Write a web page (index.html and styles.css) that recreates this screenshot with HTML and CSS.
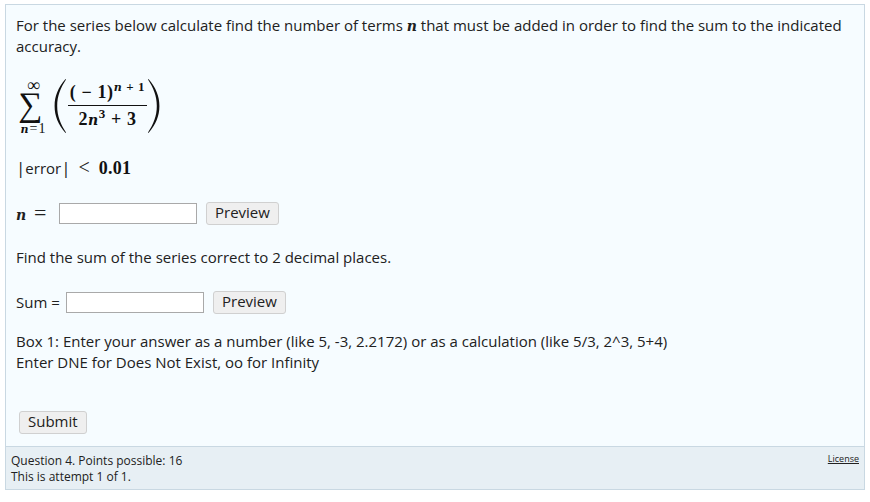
FILE: index.html
```html
<!DOCTYPE html>
<html lang="en">
<head>
	<meta charset="UTF-8">
	<title>Question 4</title>
	<link rel="stylesheet" href="styles.css">
</head>
<body>
	<div class="question">
		<div class="question-body">
			<p class="intro">For the series below calculate find the number of terms <i class="var">n</i> that must be added in order to find the sum to the indicated accuracy.</p>

			<div class="series">
				<div class="sum">
					<span class="sum-top">∞</span>
					<span class="sum-sign">∑</span>
					<span class="sum-bottom"><i class="var">n</i>=1</span>
				</div>
				<svg class="paren" width="14" height="56" viewBox="0 0 14 56"><path d="M12.5 1 C5 10 1.6 18 1.6 28 C1.6 38 5 46 12.5 55 L13 54.5 C7.5 46 4.2 38 4.2 28 C4.2 18 7.5 10 13 1.5 Z"/></svg>
				<div class="fraction">
					<div class="numerator">( − 1)<sup><i class="var">n</i> + 1</sup></div>
					<div class="denominator">2<i class="var">n</i><sup>3</sup> + 3</div>
				</div>
				<svg class="paren" width="14" height="56" viewBox="0 0 14 56"><path d="M1.5 1 C9 10 12.4 18 12.4 28 C12.4 38 9 46 1.5 55 L1 54.5 C6.5 46 9.8 38 9.8 28 C9.8 18 6.5 10 1 1.5 Z"/></svg>
			</div>

			<p class="accuracy"><span class="bar">|</span>error<span class="bar">|</span> <span class="lt">&lt;</span> <b>0.01</b></p>

			<div class="answer-row">
				<span class="answer-label"><i class="var">n</i> <span class="eq">=</span></span>
				<input type="text" class="answer">
				<button class="btn preview">Preview</button>
			</div>

			<p class="second">Find the sum of the series correct to 2 decimal places.</p>

			<div class="answer-row sum-row">
				<span class="answer-label-plain">Sum =</span>
				<input type="text" class="answer">
				<button class="btn preview">Preview</button>
			</div>

			<p class="hint">Box 1: Enter your answer as a number (like 5, -3, 2.2172) or as a calculation (like 5/3, 2^3, 5+4)<br>Enter DNE for Does Not Exist, oo for Infinity</p>

			<button class="btn submit">Submit</button>
		</div>
		<div class="question-footer">
			<div>Question 4. Points possible: 16<br>This is attempt 1 of 1.</div>
			<a href="#" class="license">License</a>
		</div>
	</div>
</body>
</html>
```

FILE: styles.css
```css
* { box-sizing: border-box; }
html, body { margin: 0; padding: 0; background: #fff; }
body { padding: 4px 5px 0; font-family: "Open Sans", sans-serif; font-size: 15px; line-height: 21px; color: #212121; }

.question { width: 860px; height: 486px; border: 1px solid #c9d8e2; display: flex; flex-direction: column; }
.question-body { flex: 1; background: #f6fcff; padding: 10px 10px 0; }
p { margin: 0; }

.var { font-family: "DejaVu Serif", serif; font-weight: bold; font-style: italic; font-size: 14px; line-height: 0; }

/* series */
.series { display: flex; align-items: center; height: 74px; margin-top: 12px; font-family: "Liberation Serif", serif; font-weight: bold; color: #111; }
.sum { width: 37px; height: 74px; position: relative; text-align: center; flex: none; }
.sum-top { position: absolute; left: 1px; top: 9px; width: 33px; font-size: 18px; line-height: 14px; font-weight: normal; }
.sum-sign { position: absolute; left: -1px; top: 19px; width: 30px; font-weight: normal; font-size: 34px; line-height: 34px; }
.sum-bottom { position: absolute; left: 1px; top: 53px; width: 33px; font-size: 14px; line-height: 14px; white-space: nowrap; letter-spacing: 1px; font-weight: normal; }
.sum-bottom .var { font-size: 11px; }
.paren { fill: #111; flex: none; }
.fraction { width: 79px; margin: 0 0 0 1px; text-align: center; font-size: 18px; letter-spacing: .6px; flex: none; }
.numerator { line-height: 24px; height: 26px; border-bottom: 1.5px solid #111; white-space: nowrap; }
.denominator { line-height: 26px; white-space: nowrap; }
.fraction .var { font-size: 14px; }
sup { font-size: 13px; line-height: 0; vertical-align: 7px; }
sup .var, .fraction sup .var { font-size: 11px; }

.accuracy { margin-top: 14px; height: 21px; }
.bar { font-size: 17px; }
.lt { font-family: "Liberation Serif", serif; font-size: 20px; margin-left: 4px; }
.accuracy b { font-family: "Liberation Serif", serif; font-size: 18px; margin-left: 5px; letter-spacing: .3px; color: #111; }

/* answers */
.answer-row { display: flex; align-items: center; margin-top: 23px; height: 24px; }
.answer-label { width: 43px; }
.answer-label-plain { width: 50px; }
.eq { font-family: "Liberation Serif", serif; font-size: 22px; margin-left: 4px; }
.answer { width: 138px; height: 21px; margin: 1px 9px 0 0; padding: 0; border: 1px solid #a9a9a9; background: #fff; flex: none; }
.btn { font-family: "Open Sans", sans-serif; font-size: 15px; color: #212121; background: #efefef; border: 1px solid #d0d0d0; border-radius: 3px; padding: 0 8px 2px; height: 23px; line-height: 19px; }
.second { margin-top: 22px; }
.sum-row { margin-top: 22px; }
.hint { margin-top: 17px; }
.submit { display: block; margin: 38px 0 0 3px; }

/* footer */
.question-footer { height: 43px; background: #e7eff4; border-top: 1px solid #c9d8e2; padding: 6px 5px 0; display: flex; justify-content: space-between; font-size: 12px; line-height: 16px; }
.license { font-size: 9px; line-height: 12px; color: #212121; }
```
